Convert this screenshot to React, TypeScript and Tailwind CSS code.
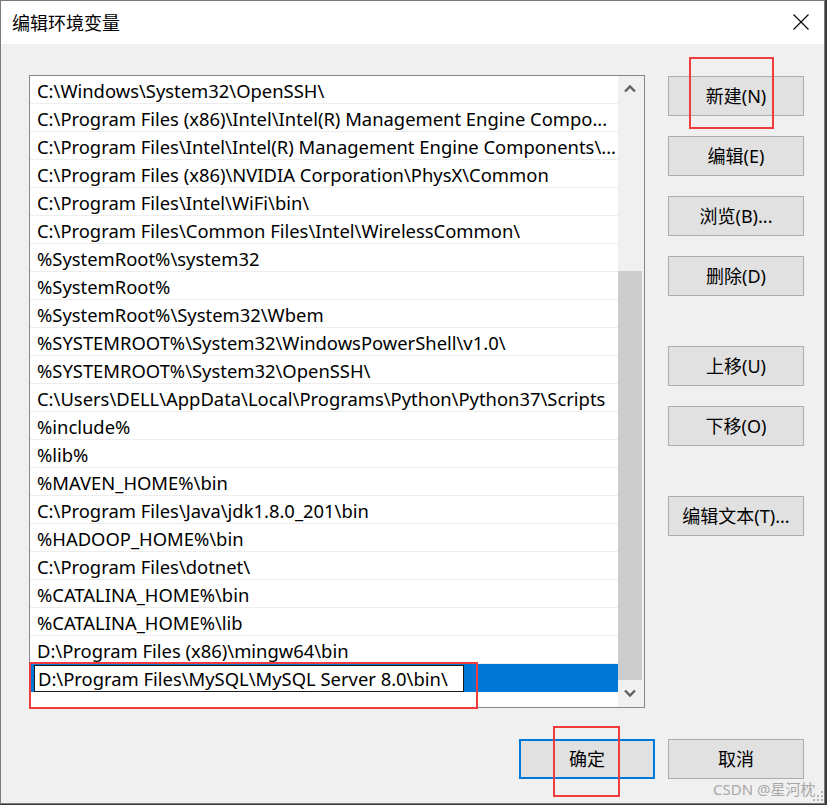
import React from "react";

const rows = [
  "C:\\Windows\\System32\\OpenSSH\\",
  "C:\\Program Files (x86)\\Intel\\Intel(R) Management Engine Compo...",
  "C:\\Program Files\\Intel\\Intel(R) Management Engine Components\\...",
  "C:\\Program Files (x86)\\NVIDIA Corporation\\PhysX\\Common",
  "C:\\Program Files\\Intel\\WiFi\\bin\\",
  "C:\\Program Files\\Common Files\\Intel\\WirelessCommon\\",
  "%SystemRoot%\\system32",
  "%SystemRoot%",
  "%SystemRoot%\\System32\\Wbem",
  "%SYSTEMROOT%\\System32\\WindowsPowerShell\\v1.0\\",
  "%SYSTEMROOT%\\System32\\OpenSSH\\",
  "C:\\Users\\DELL\\AppData\\Local\\Programs\\Python\\Python37\\Scripts",
  "%include%",
  "%lib%",
  "%MAVEN_HOME%\\bin",
  "C:\\Program Files\\Java\\jdk1.8.0_201\\bin",
  "%HADOOP_HOME%\\bin",
  "C:\\Program Files\\dotnet\\",
  "%CATALINA_HOME%\\bin",
  "%CATALINA_HOME%\\lib",
  "D:\\Program Files (x86)\\mingw64\\bin",
];

const font = { fontFamily: '"Noto Sans", "Noto Sans CJK SC", sans-serif' };

function Btn({ label, primary = false }: { label: string; primary?: boolean }) {
  return (
    <div
      className={
        "w-[136px] h-[40px] flex items-center justify-center bg-[#e1e1e1] text-[18px] text-black " +
        (primary ? "border-2 border-[#0078d7]" : "border border-[#adadad]")
      }
    >
      {label}
    </div>
  );
}

export default function App() {
  return (
    <div className="w-[827px] h-[805px] bg-[#3b3b3b] relative overflow-hidden" style={font}>
      <div className="w-[825px] h-[804px] border border-[#7a7a7a] flex flex-col bg-[#f0f0f0]">
        {/* title bar */}
        <div className="h-[43px] bg-white flex items-center justify-between pl-[11px] pr-[15px]">
          <span className="text-[18px] text-black leading-none">编辑环境变量</span>
          <svg width="16" height="16" viewBox="0 0 16 16" className="mt-[-1px]">
            <path d="M0.5 0.5 L15.5 15.5 M15.5 0.5 L0.5 15.5" stroke="#000" strokeWidth="1.1" fill="none" />
          </svg>
        </div>
        {/* body */}
        <div className="flex-1 flex flex-col pt-[31px] pl-[28px] pr-[20px]">
          <div className="flex gap-[23px]">
            {/* list box */}
            <div className="w-[616px] h-[633px] border border-[#828790] bg-white flex">
              <div className="flex-1 flex flex-col overflow-hidden">
                {rows.map((r) => (
                  <div
                    key={r}
                    className="h-[28px] shrink-0 flex items-center pl-[7px] pt-[2px] border-b border-[#ededed] text-[18.4px] text-black whitespace-nowrap overflow-hidden"
                  >
                    {r}
                  </div>
                ))}
                <div className="h-[28px] shrink-0 bg-[#0078d7] flex items-center pl-[4px] pt-[1px]">
                  <div className="h-[27px] bg-white border border-[#1a1a1a] flex items-center pl-[3px] pr-[15px] text-[18.4px] text-black whitespace-nowrap">
                    D:\Program Files\MySQL\MySQL Server 8.0\bin\
                  </div>
                </div>
              </div>
              {/* scrollbar */}
              <div className="w-[26px] bg-[#f0f0f0] flex flex-col">
                <div className="h-[25px] flex items-center justify-center pr-[2px]">
                  <svg width="12" height="9" viewBox="0 0 12 9">
                    <path d="M1 7.5 L6 2.5 L11 7.5" stroke="#606060" strokeWidth="2.4" fill="none" />
                  </svg>
                </div>
                <div className="h-[170px]" />
                <div className="w-[24px] h-[409px] bg-[#cdcdcd]" />
                <div className="h-[27px] flex items-center justify-center pr-[2px]">
                  <svg width="12" height="9" viewBox="0 0 12 9">
                    <path d="M1 1.5 L6 6.5 L11 1.5" stroke="#606060" strokeWidth="2.4" fill="none" />
                  </svg>
                </div>
              </div>
            </div>
            {/* side buttons */}
            <div className="flex flex-col pt-[1px]">
              <div className="flex flex-col gap-[20px]">
                <Btn label="新建(N)" />
                <Btn label="编辑(E)" />
                <Btn label="浏览(B)..." />
                <Btn label="删除(D)" />
              </div>
              <div className="flex flex-col gap-[20px] mt-[50px]">
                <Btn label="上移(U)" />
                <Btn label="下移(O)" />
              </div>
              <div className="mt-[50px]">
                <Btn label="编辑文本(T)..." />
              </div>
            </div>
          </div>
          <div className="flex justify-end gap-[13px] mt-[31px]">
            <Btn label="确定" primary />
            <Btn label="取消" />
          </div>
        </div>
      </div>

      {/* red annotation boxes */}
      <div className="absolute left-[689px] top-[57px] w-[85px] h-[72px] border-2 border-[#f03c3c]" />
      <div className="absolute left-[29px] top-[662px] w-[449px] h-[47px] border-2 border-[#f03c3c]" />
      <div className="absolute left-[553px] top-[726px] w-[67px] h-[71px] border-2 border-[#f03c3c]" />

      {/* watermark */}
      <div className="absolute left-[713px] top-[779px] text-[15px] text-[#a8a8a8] leading-[20px] whitespace-nowrap">
        CSDN @星河枕
      </div>
      {/* resize grip */}
      <svg className="absolute left-[813px] top-[791px]" width="11" height="11" viewBox="0 0 11 11">
        <rect x="8" y="0" width="2" height="2" fill="#b5b5b5" />
        <rect x="4" y="4" width="2" height="2" fill="#b5b5b5" />
        <rect x="8" y="4" width="2" height="2" fill="#b5b5b5" />
        <rect x="0" y="8" width="2" height="2" fill="#b5b5b5" />
        <rect x="4" y="8" width="2" height="2" fill="#b5b5b5" />
        <rect x="8" y="8" width="2" height="2" fill="#b5b5b5" />
      </svg>
    </div>
  );
}
